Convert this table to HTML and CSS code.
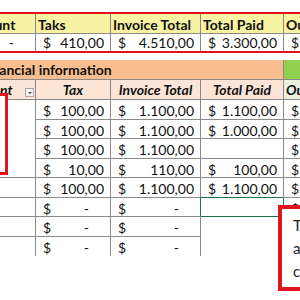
FILE: index.html
```html
<!DOCTYPE html>
<html>
<head>
<meta charset="utf-8">
<link rel="stylesheet" href="styles.css">
</head>
<body>
<div class="sheet">
  <div class="summary">
    <div class="row shead">
      <div class="c">Amount</div>
      <div class="c">Taks</div>
      <div class="c">Invoice Total</div>
      <div class="c">Total Paid</div>
      <div class="c">Outstanding</div>
    </div>
    <div class="row svals">
      <div class="c num"><span>$</span><span class="dash">-</span></div>
      <div class="c num"><span>$</span><span>410,00</span></div>
      <div class="c num"><span>$</span><span>4.510,00</span></div>
      <div class="c num"><span>$</span><span>3.300,00</span></div>
      <div class="c num"><span>$</span><span>1.210,00</span></div>
    </div>
  </div>

  <div class="fin">
    <div class="row title">
      <div class="c t-main">Financial information</div>
      <div class="c t-green"></div>
    </div>
    <div class="row fhead">
      <div class="c first"><span>Amount</span><span class="filter"><i></i></span></div>
      <div class="c">Tax</div>
      <div class="c">Invoice Total</div>
      <div class="c">Total Paid</div>
      <div class="c out">Outstanding</div>
    </div>

    <div class="row data">
      <div class="c nb"></div>
      <div class="c num"><span>$</span><span>100,00</span></div>
      <div class="c num"><span>$</span><span>1.100,00</span></div>
      <div class="c num"><span>$</span><span>1.100,00</span></div>
      <div class="c num"><span>$</span><span class="dash">-</span></div>
    </div>
    <div class="row data">
      <div class="c nb"></div>
      <div class="c num"><span>$</span><span>100,00</span></div>
      <div class="c num"><span>$</span><span>1.100,00</span></div>
      <div class="c num"><span>$</span><span>1.000,00</span></div>
      <div class="c num"><span>$</span><span>100,00</span></div>
    </div>
    <div class="row data">
      <div class="c nb"></div>
      <div class="c num"><span>$</span><span>100,00</span></div>
      <div class="c num"><span>$</span><span>1.100,00</span></div>
      <div class="c"></div>
      <div class="c num"><span>$</span><span>1.100,00</span></div>
    </div>
    <div class="row data">
      <div class="c"></div>
      <div class="c num"><span>$</span><span>10,00</span></div>
      <div class="c num"><span>$</span><span>110,00</span></div>
      <div class="c num"><span>$</span><span>100,00</span></div>
      <div class="c num"><span>$</span><span>10,00</span></div>
    </div>
    <div class="row data">
      <div class="c"></div>
      <div class="c num"><span>$</span><span>100,00</span></div>
      <div class="c num"><span>$</span><span>1.100,00</span></div>
      <div class="c num"><span>$</span><span>1.100,00</span></div>
      <div class="c num"><span>$</span><span class="dash">-</span></div>
    </div>
    <div class="row data">
      <div class="c"></div>
      <div class="c num"><span>$</span><span class="dash">-</span></div>
      <div class="c num"><span>$</span><span class="dash">-</span></div>
      <div class="c sel"></div>
      <div class="c num"><span>$</span></div>
    </div>
    <div class="row data">
      <div class="c"></div>
      <div class="c num"><span>$</span><span class="dash">-</span></div>
      <div class="c num"><span>$</span><span class="dash">-</span></div>
      <div class="c nb"></div>
      <div class="c"></div>
    </div>
    <div class="row data last">
      <div class="c"></div>
      <div class="c num"><span>$</span><span class="dash">-</span></div>
      <div class="c num"><span>$</span><span class="dash">-</span></div>
      <div class="c"></div>
      <div class="c"></div>
    </div>
  </div>
</div>

<div class="note note-left"></div>
<div class="note note-right">The outstanding<br>amount is<br>calculated automatically</div>
</body>
</html>
```

FILE: styles.css
```css
html, body {
  margin: 0;
  padding: 0;
  overflow: hidden;
  background: #ffffff;
}

body {
  width: 300px;
  height: 300px;
  position: relative;
  font-family: Lato, "Open Sans", "Liberation Sans", sans-serif;
  font-size: 14px;
  color: #111111;
}

.sheet {
  margin-left: -43px;
  padding-top: 12px;
  width: 420px;
}

.row {
  display: grid;
  grid-template-columns: 79px 75px 90px 83px 93px;
}

.c {
  box-sizing: border-box;
  border-right: 1px solid #8a8a8a;
  border-bottom: 1px solid #8a8a8a;
  white-space: nowrap;
  overflow: hidden;
  line-height: 19px;
}

.num {
  display: flex;
  justify-content: space-between;
  padding: 0 6px 0 7px;
}

.dash {
  margin-right: 15px;
}

/* top summary block */
.summary {
  border-top: 2px solid #e0141e;
  border-bottom: 2px solid #e0141e;
}

.shead .c {
  height: 20px;
  padding: 1px 0 0 2px;
  background: #f8f2a3;
  font-weight: 700;
}

.shead .c:first-child {
  padding-left: 8px;
}

.svals .c {
  height: 17px;
  line-height: 17px;
  border-bottom: none;
}

/* financial block */
.fin {
  margin-top: 7px;
}

.title .c {
  height: 20px;
}

.t-main {
  grid-column: 1 / 5;
  background: #f9be8f;
  font-weight: 700;
  padding-left: 23px;
}

.t-green {
  background: #92d050;
}

.fhead .c {
  height: 20px;
  background: #fce4d6;
  font-weight: 700;
  font-style: italic;
  text-align: center;
}

.fhead .first {
  display: flex;
  justify-content: space-between;
  align-items: flex-end;
  text-align: left;
  padding-left: 8px;
}

.fhead .first span:first-child {
  align-self: flex-start;
}

.fhead .out {
  background: #ebf1de;
  text-align: left;
  padding-left: 2px;
}

.filter {
  box-sizing: border-box;
  width: 9px;
  height: 9px;
  margin: 0 1px 2px 0;
  border: 1px solid #a8a8a8;
  background: #f2f2f2;
  display: flex;
  align-items: center;
  justify-content: center;
}

.filter i {
  display: block;
  width: 0;
  height: 0;
  border-left: 2px solid transparent;
  border-right: 2px solid transparent;
  border-top: 2px solid #444444;
}

.data .c {
  height: 19.5px;
  padding-top: 1px;
}

.data .nb {
  border-bottom: none;
}

.data .sel {
  border-right: 1px solid #217346;
  border-bottom: 1px solid #217346;
  box-shadow: -1px -1px 0 #217346;
}

.data.last .c {
  border-bottom: none;
}

/* comment boxes */
.note {
  position: absolute;
  box-sizing: border-box;
  background: #ffffff;
  border: 3px solid #e0141e;
}

.note-left {
  left: -60px;
  top: 93px;
  width: 68px;
  height: 82px;
}

.note-right {
  left: 278px;
  top: 205px;
  width: 220px;
  height: 86px;
  border-width: 4px;
  padding: 5px 0 0 11px;
  font-size: 15px;
  line-height: 23px;
  color: #222222;
  white-space: nowrap;
}
```
